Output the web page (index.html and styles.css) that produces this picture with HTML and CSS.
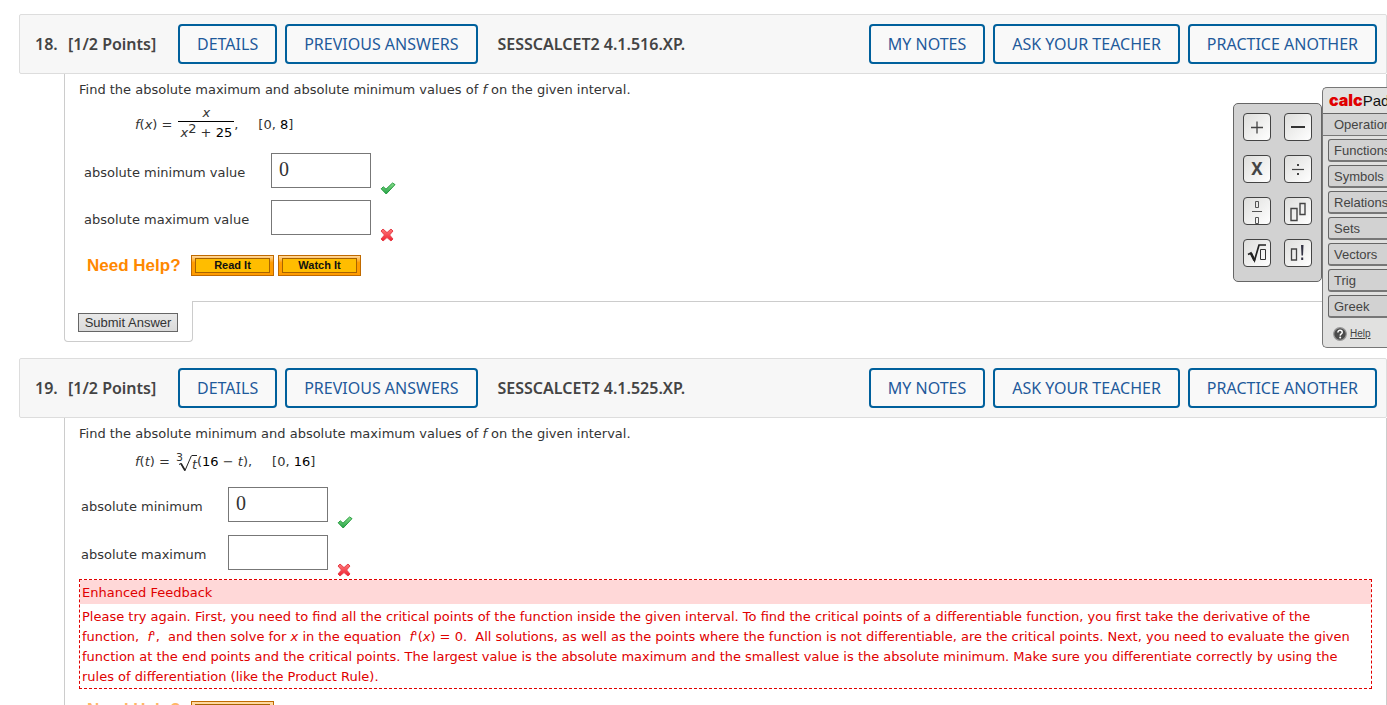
FILE: index.html
```
<!DOCTYPE html>
<html lang="en">
<head>
<meta charset="utf-8">
<title>Assignment</title>
<link rel="stylesheet" href="styles.css">
</head>
<body>
<svg class="defs" aria-hidden="true">
  <defs>
    <linearGradient id="green" x1="0" y1="0" x2="0" y2="1"><stop offset="0" stop-color="#8be08b"/><stop offset="1" stop-color="#22a045"/></linearGradient>
    <linearGradient id="red" x1="0" y1="0" x2="0" y2="1"><stop offset="0" stop-color="#ff7a7a"/><stop offset="1" stop-color="#f02030"/></linearGradient>
    <symbol id="right" viewBox="0 0 16 13"><path d="M1.2 6.8 3.3 4.8 6 7.2 12.5 1 15 2.6 6.2 12Z" fill="url(#green)" stroke="#219a3c" stroke-width="1" stroke-linejoin="round"/></symbol>
    <symbol id="wrong" viewBox="0 0 14 14"><path d="M3 1 7 4.6 11 1 13 3 9.6 7 13 11 11 13 7 9.5 3 13 1 11 4.5 7 1 3Z" fill="url(#red)" stroke="#e5404a" stroke-width="1" stroke-linejoin="round"/></symbol>
  </defs>
</svg>
<main class="page">
  <section class="question">
    <header class="bar">
      <span class="num">18.</span><span class="points">[1/2 Points]</span>
      <button class="btn">DETAILS</button><button class="btn">PREVIOUS ANSWERS</button>
      <h2 class="source">SESSCALCET2 4.1.516.XP.</h2>
      <button class="btn">MY NOTES</button><button class="btn">ASK YOUR TEACHER</button><button class="btn">PRACTICE ANOTHER</button>
    </header>
    <div class="body">
      <p class="prompt">Find the absolute maximum and absolute minimum values of <i>f</i> on the given interval.</p>
      <div class="equation tall">
        <span><i>f</i>(<i>x</i>) =</span>
        <span class="fraction"><span class="top"><i>x</i></span><span class="bottom"><i>x</i><sup>2</sup> + <b>25</b></span></span><span class="comma">,</span>
        <span class="interval">[0, <b>8</b>]</span>
      </div>
      <div class="answers wide">
        <div class="row"><label for="a1">absolute minimum value</label><input id="a1" class="answer" value="0"><svg class="right"><use href="#right"/></svg></div>
        <div class="row"><label for="a2">absolute maximum value</label><input id="a2" class="answer"><svg class="wrong"><use href="#wrong"/></svg></div>
      </div>
      <div class="help"><span class="need">Need Help?</span><button class="gold">Read It</button><button class="gold">Watch It</button></div>
    </div>
    <div class="foot"><div class="submit-tab"><button class="submit">Submit Answer</button></div><div class="edge"></div></div>
  </section>

  <section class="question">
    <header class="bar">
      <span class="num">19.</span><span class="points">[1/2 Points]</span>
      <button class="btn">DETAILS</button><button class="btn">PREVIOUS ANSWERS</button>
      <h2 class="source">SESSCALCET2 4.1.525.XP.</h2>
      <button class="btn">MY NOTES</button><button class="btn">ASK YOUR TEACHER</button><button class="btn">PRACTICE ANOTHER</button>
    </header>
    <div class="body">
      <p class="prompt">Find the absolute minimum and absolute maximum values of <i>f</i> on the given interval.</p>
      <div class="equation">
        <span><i>f</i>(<i>t</i>) =</span>
        <span class="root"><span class="index">3</span><svg class="radical" viewBox="0 0 14 17"><path d="M1 9.5 3 8.500 7 15.500 13.500.5" fill="none" stroke="#222"/><path d="m3 8.500 4 7" stroke="#222" stroke-width="1.600"/></svg><span class="radicand"><i>t</i></span></span><span>(<b>16</b> − <i>t</i>),</span>
        <span class="interval">[0, <b>16</b>]</span>
      </div>
      <div class="answers narrow">
        <div class="row"><label for="b1">absolute minimum</label><input id="b1" class="answer" value="0"><svg class="right"><use href="#right"/></svg></div>
        <div class="row"><label for="b2">absolute maximum</label><input id="b2" class="answer"><svg class="wrong"><use href="#wrong"/></svg></div>
      </div>
      <div class="feedback">
        <h3 class="feedback-title">Enhanced Feedback</h3>
        <p class="feedback-text">Please try again. First, you need to find all the critical points of the function inside the given interval. To find the critical points of a differentiable function, you first take the derivative of the function, &nbsp;<i>f'</i>, &nbsp;and then solve for <i>x</i> in the equation &nbsp;<i>f'</i>(<i>x</i>) = 0. &nbsp;All solutions, as well as the points where the function is not differentiable, are the critical points. Next, you need to evaluate the given function at the end points and the critical points. The largest value is the absolute maximum and the smallest value is the absolute minimum. Make sure you differentiate correctly by using the rules of differentiation (like the Product Rule).</p>
      </div>
      <div class="help faded"><span class="need">Need Help?</span><button class="gold">Read It</button></div>
    </div>
  </section>
</main>

<aside class="calcpad">
  <div class="keys">
    <button class="key" aria-label="plus"><svg viewBox="0 0 26 26"><path d="M7 13.500h12M13 7.500v12" stroke="#444" stroke-width="1.300"/></svg></button>
    <button class="key" aria-label="minus"><svg viewBox="0 0 26 26"><path d="M6 13h14" stroke="#333" stroke-width="2"/></svg></button>
    <button class="key times">X</button>
    <button class="key" aria-label="divide"><svg viewBox="0 0 26 26"><path d="M7 13.500h12" stroke="#444" stroke-width="1.200"/><path d="M12 8h2v2h-2zM12 17h2v2h-2z" fill="#444"/></svg></button>
    <button class="key" aria-label="fraction"><svg viewBox="0 0 26 26"><path d="M8 13.500h10M11.500 3.500h3v6h-3zM11.500 19.500h3v6h-3z" fill="none" stroke="#555"/></svg></button>
    <button class="key" aria-label="power"><svg viewBox="0 0 26 26"><path d="M6 10.500h6v12H6zM15 5.500h5v11h-5z" fill="none" stroke="#444" stroke-width="1.400"/></svg></button>
    <button class="key" aria-label="square root"><svg viewBox="0 0 26 26"><path d="m4 14.500 3-1.500 3.500 7.500 4.500-15.500h7" fill="none" stroke="#222" stroke-width="1.700"/><path d="m7 13.500 3.500 7" stroke="#222" stroke-width="2.500"/><path d="M16.500 9.500h5v10h-5z" fill="none" stroke="#333"/></svg></button>
    <button class="key" aria-label="factorial"><svg viewBox="0 0 26 26"><path d="M6.500 9h5v11h-5z" fill="none" stroke="#444" stroke-width="1.300"/><path d="M16 5h2.500L18 15.500h-1.500zM16.200 17.500h2V20h-2z" fill="#334"/></svg></button>
  </div>
  <nav class="side">
    <div class="brand"><strong>calc</strong>Pad</div>
    <button class="cat current">Operations</button>
    <div class="cats">
      <button class="cat">Functions</button>
      <button class="cat">Symbols</button>
      <button class="cat">Relations</button>
      <button class="cat">Sets</button>
      <button class="cat">Vectors</button>
      <button class="cat">Trig</button>
      <button class="cat">Greek</button>
    </div>
    <a class="help-link" href="#"><svg viewBox="0 0 14 14"><circle cx="7" cy="7" r="6.300" fill="#4c4c4c" stroke="#999" stroke-width="1.200"/><path d="M4.900 5.400c0-3 4.400-2.600 4.300 0C9.200 7 7.300 6.700 7.200 8.600" fill="none" stroke="#fff" stroke-width="1.500"/><circle cx="7.200" cy="10.600" r="1" fill="#fff"/></svg><span>Help</span></a>
  </nav>
</aside>
</body>
</html>
```
FILE: styles.css
```
* { box-sizing: border-box; }
body {
  margin: 0;
  height: 100vh;
  overflow: hidden;
  position: relative;
  background: #fff;
  color: #333;
  font: 13px/20px "DejaVu Sans", Verdana, sans-serif;
}
button, input { font: inherit; color: inherit; margin: 0; }
h2, h3, p { margin: 0; font-weight: normal; }
b { font-weight: normal; color: #000; }
.defs { position: absolute; width: 0; height: 0; }

.page { padding: 14px 0 0 19px; }
.question { margin-bottom: 16px; }

.bar {
  display: flex;
  align-items: center;
  gap: 8px;
  height: 60px;
  padding: 0 9px 0 15px;
  border: 1px solid #ddd;
  border-radius: 2px;
  background: #f7f7f7;
  font: 16px/22px "Noto Sans", "Open Sans", sans-serif;
  white-space: nowrap;
}
.num, .points, .source { font-size: 16px; font-weight: 600; color: #444; }
.num { width: 25px; }
.points { width: 102px; }
.source { flex: 1; padding-left: 12px; }
.btn {
  height: 40px;
  padding: 0 17px;
  border: 2px solid #00609c;
  border-radius: 4px;
  background: #f9f9f9;
  color: #1f5a9b;
}

.body {
  margin-left: 45px;
  padding: 6px 14px 25px;
  border: solid #ccc;
  border-width: 0 1px;
}
.equation {
  display: flex;
  align-items: center;
  height: 24px;
  margin: 6px 0 13px;
  padding-left: 56px;
  white-space: pre;
}
.equation.tall { height: 37px; margin: 6px 0 10px; }
.interval { margin-left: 20px; }
.fraction { margin-left: 6px; text-align: center; }
.top, .bottom { display: block; }
.top { line-height: 16px; border-bottom: 1px solid #000; }
.bottom { line-height: 22px; padding: 0 2px; }
.bottom sup { font-size: 13px; line-height: 0; vertical-align: 4px; }
.root { display: flex; margin-left: 6px; }
.index { font-size: 11px; line-height: 10px; }
.radical { width: 14px; height: 17px; margin: 2px 0 0 -5px; }
.radicand { height: 17px; margin-top: 2px; border-top: 1px solid #222; line-height: 17px; }

.row { display: flex; height: 47px; }
.row label { height: 35px; padding-top: 2px; line-height: 35px; }
.wide label { width: 192px; padding-left: 5px; }
.narrow label { width: 149px; padding-left: 2px; }
.narrow .row { height: 48px; }
.narrow { margin-bottom: -4px; }
.answer {
  width: 100px;
  height: 35px;
  padding: 0 7px 2px;
  border: 1px solid #777;
  background: #fff;
  font: 20px "Liberation Serif", serif;
}
.right, .wrong { margin: 28px 0 0 9px; }
.right { width: 16px; height: 13px; margin-top: 29px; }
.wrong { width: 14px; height: 14px; }

.help { display: flex; gap: 4px; height: 21px; margin-top: 8px; padding-left: 8px; }
.need {
  width: 100px;
  color: #f80;
  font: bold 17px/21px "Liberation Sans", Arial, sans-serif;
}
.gold {
  width: 83px;
  padding: 0;
  border: 1px solid #c06a00;
  background: linear-gradient(#ffd9a0, #ff9c00 35%);
  color: #111;
  font: bold 11px/13px "Liberation Sans", Arial, sans-serif;
  position: relative;
  z-index: 0;
}
.gold::before {
  content: "";
  position: absolute;
  inset: 2px 3px;
  z-index: -1;
  border: 1px solid #a86300;
  background: #ffbd00;
}
.faded { margin-top: 12px; }
.faded .need { line-height: 17px; opacity: .6; }
.faded .gold { background: #ffd9a0; }

.foot { display: flex; margin-left: 45px; }
.submit-tab {
  width: 129px;
  padding: 12px 13px 9px;
  border: solid #ccc;
  border-width: 0 1px 1px;
  border-radius: 0 0 4px 4px;
}
.edge { flex: 1; border-top: 1px solid #ccc; }
.submit {
  display: block;
  width: 100px;
  height: 19px;
  padding: 0;
  border: 1px solid #666;
  background: linear-gradient(#e8e8e8, #dadada);
  font: 13px/16px "Liberation Sans", Arial, sans-serif;
}

.feedback { border: 1px dashed #e00000; color: #e00000; }
.feedback-title { padding: 3px 2px 1px; background: #ffd8d8; font-size: 13px; }
.feedback-text { padding: 3px 2px 1px; }

.calcpad {
  position: absolute;
  top: 87px;
  right: 0;
  display: flex;
  align-items: flex-start;
  font: 13px/16px "Liberation Sans", Arial, sans-serif;
  color: #444;
}
.keys {
  display: grid;
  grid-template-columns: 28px 28px;
  gap: 14px 13px;
  margin-top: 16px;
  padding: 9px;
  padding-bottom: 14px;
  border: 1px solid #666;
  border-radius: 5px;
  background: #d2d2d2;
}
.key {
  height: 28px;
  padding: 0;
  border: 1px solid #444;
  border-radius: 4px;
  background: linear-gradient(135deg, #dededc, #fff);
}
.key svg { display: block; width: 26px; height: 26px; }
.times { font: bold 17px/20px "Noto Sans", sans-serif; }
.side {
  width: 65px;
  height: 261px;
  border: 1px solid #777;
  border-right: 0;
  border-radius: 5px 0 0 5px;
  background: #e1e1e0;
  overflow: hidden;
  white-space: nowrap;
}
.brand { padding: 4px 0 4px 6px; color: #111; font-size: 15px; }
.brand strong { color: #e00000; font-family: Inter, sans-serif; font-weight: 900; font-size: 16px; }
.cat {
  display: block;
  width: 80px;
  height: 23px;
  padding: 1px 0 0 5px;
  border: 1px solid #666;
  border-bottom: 2px solid #777;
  border-radius: 3px;
  background: #d2d2d2;
  text-align: left;
}
.current {
  margin-left: -1px;
  width: 90px;
  padding: 0 0 0 12px;
  border-width: 1px 0;
  border-radius: 0;
}
.cats { display: grid; gap: 3px; padding: 3px 0 0 5px; }
.help-link {
  display: flex;
  gap: 3px;
  align-items: center;
  margin-top: 8px;
  padding-left: 10px;
  color: #444;
  font-size: 10px;
}
.help-link svg { width: 14px; height: 14px; }
```
